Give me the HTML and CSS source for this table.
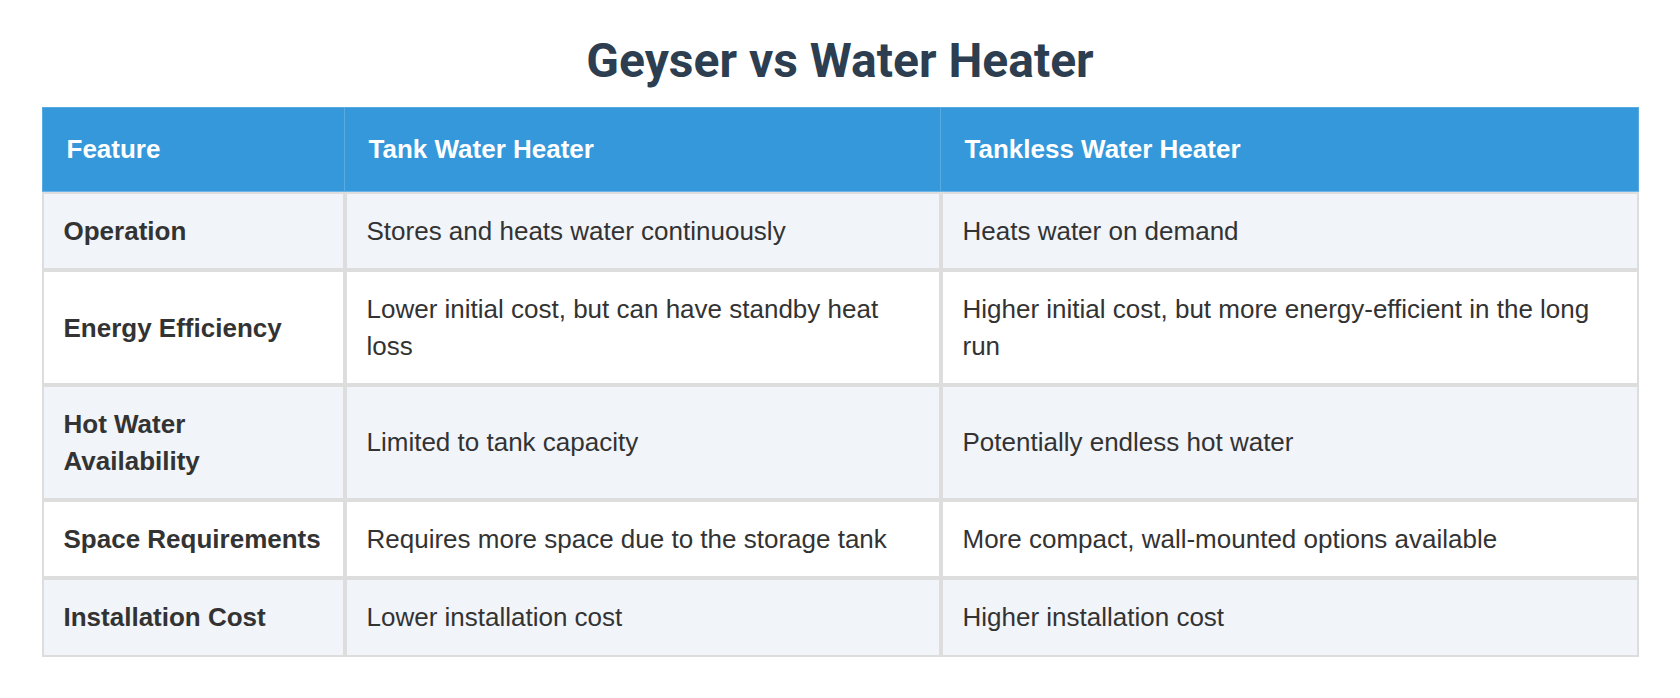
FILE: index.html
```html
<!DOCTYPE html>
<html lang="en">
<head>
<meta charset="utf-8">
<title>Geyser vs Water Heater</title>
<link rel="stylesheet" href="styles.css">
</head>
<body>
<main class="page">
  <h1 class="title">Geyser vs Water Heater</h1>
  <table class="compare">
    <colgroup>
      <col class="c-feature">
      <col class="c-tank">
      <col class="c-tankless">
    </colgroup>
    <thead>
      <tr>
        <th>Feature</th>
        <th>Tank Water Heater</th>
        <th>Tankless Water Heater</th>
      </tr>
    </thead>
    <tbody>
      <tr>
        <td class="feat">Operation</td>
        <td>Stores and heats water continuously</td>
        <td>Heats water on demand</td>
      </tr>
      <tr>
        <td class="feat">Energy Efficiency</td>
        <td>Lower initial cost, but can have standby heat loss</td>
        <td>Higher initial cost, but more energy-efficient in the long run</td>
      </tr>
      <tr>
        <td class="feat">Hot Water Availability</td>
        <td>Limited to tank capacity</td>
        <td>Potentially endless hot water</td>
      </tr>
      <tr>
        <td class="feat">Space Requirements</td>
        <td>Requires more space due to the storage tank</td>
        <td>More compact, wall-mounted options available</td>
      </tr>
      <tr>
        <td class="feat">Installation Cost</td>
        <td>Lower installation cost</td>
        <td>Higher installation cost</td>
      </tr>
    </tbody>
  </table>
</main>
</body>
</html>
```

FILE: styles.css
```css
html, body {
  margin: 0;
  padding: 0;
  background: #ffffff;
}

body {
  font-family: "Liberation Sans", Arial, sans-serif;
  color: #333333;
}

.page {
  padding-top: 32px;
}

.title {
  margin: 0 0 17px;
  text-align: center;
  font-family: Roboto, "Liberation Sans", Arial, sans-serif;
  font-weight: 700;
  font-size: 48px;
  line-height: 57.6px;
  color: #2c3e50;
}

.compare {
  width: 1597px;
  margin: 0 auto;
  table-layout: fixed;
  border-collapse: separate;
  border-spacing: 0;
  font-size: 26px;
  line-height: 36.4px;
}

.c-feature { width: 303px; }
.c-tank { width: 596px; }
.c-tankless { width: 698px; }

.compare th {
  background: #3498db;
  color: #ffffff;
  font-weight: 700;
  text-align: left;
  padding: 23px 24px 24px;
  border: 1px solid #5aaae2;
  border-bottom-color: #6ab4e8;
}

.compare th + th {
  border-left: 0;
}

.compare td {
  padding: 19px 20px;
  border: 2px solid #dddddd;
  vertical-align: middle;
  background: #ffffff;
}

.compare tbody tr:nth-child(odd) td {
  background: #f1f4f9;
}

.compare td.feat {
  font-weight: 700;
  color: #333333;
}
```
